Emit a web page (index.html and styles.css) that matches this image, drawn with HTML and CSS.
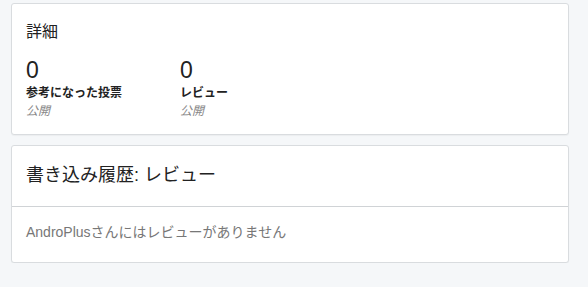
FILE: index.html
```html
<!DOCTYPE html>
<html lang="ja">
<head>
  <meta charset="UTF-8" />
  <title>AndroPlus</title>
  <link rel="stylesheet" href="styles.css">
</head>
<body>

  <div class="page">
    <div class="card">
      <div class="card-body">
        <h2 class="card-title">詳細</h2>
        <div class="stats">
          <div class="stat">
            <div class="stat-num">0</div>
            <div class="stat-label">参考になった投票</div>
            <div class="stat-note">公開</div>
          </div>
          <div class="stat">
            <div class="stat-num">0</div>
            <div class="stat-label">レビュー</div>
            <div class="stat-note">公開</div>
          </div>
        </div>
      </div>
    </div>

    <div class="card">
      <div class="card-header">
        <h2>書き込み履歴: レビュー</h2>
      </div>
      <div class="empty">
        AndroPlusさんにはレビューがありません
      </div>
    </div>
  </div>

</body>
</html>
```

FILE: styles.css
```css
body {
  font-family: "Liberation Sans", "Noto Sans CJK JP", sans-serif;
  margin: 0;
  padding: 0;
  background-color: #f5f7f9;
  color: #222;
}
.page {
  padding: 3px 19px 0 11px;
  display: flex;
  flex-direction: column;
  gap: 10px;
}
.card {
  background: #fff;
  border: 1px solid #d9dcdf;
  border-radius: 3px;
  box-shadow: 0 1px 1px rgba(0,0,0,0.04);
}
.card-body {
  padding: 16px 14px 14px;
}
.card-title {
  margin: 0;
  font-size: 16px;
  font-weight: normal;
  line-height: 24px;
}
.stats {
  display: flex;
  margin-top: 12px;
}
.stat {
  width: 154px;
}
.stat-num {
  font-size: 23px;
  line-height: 28px;
}
.stat-label {
  font-size: 12px;
  font-weight: bold;
  line-height: 18px;
}
.stat-note {
  font-size: 12px;
  font-style: italic;
  color: #888;
  line-height: 18px;
}
.card-header {
  padding: 14px 14px 16px;
  border-bottom: 1px solid #d0d3d6;
}
.card-header h2 {
  margin: 0;
  font-size: 18px;
  font-weight: normal;
  line-height: 30px;
}
.empty {
  font-size: 14px;
  color: #777;
  line-height: 20px;
  padding: 15px 14px 20px;
}
```
